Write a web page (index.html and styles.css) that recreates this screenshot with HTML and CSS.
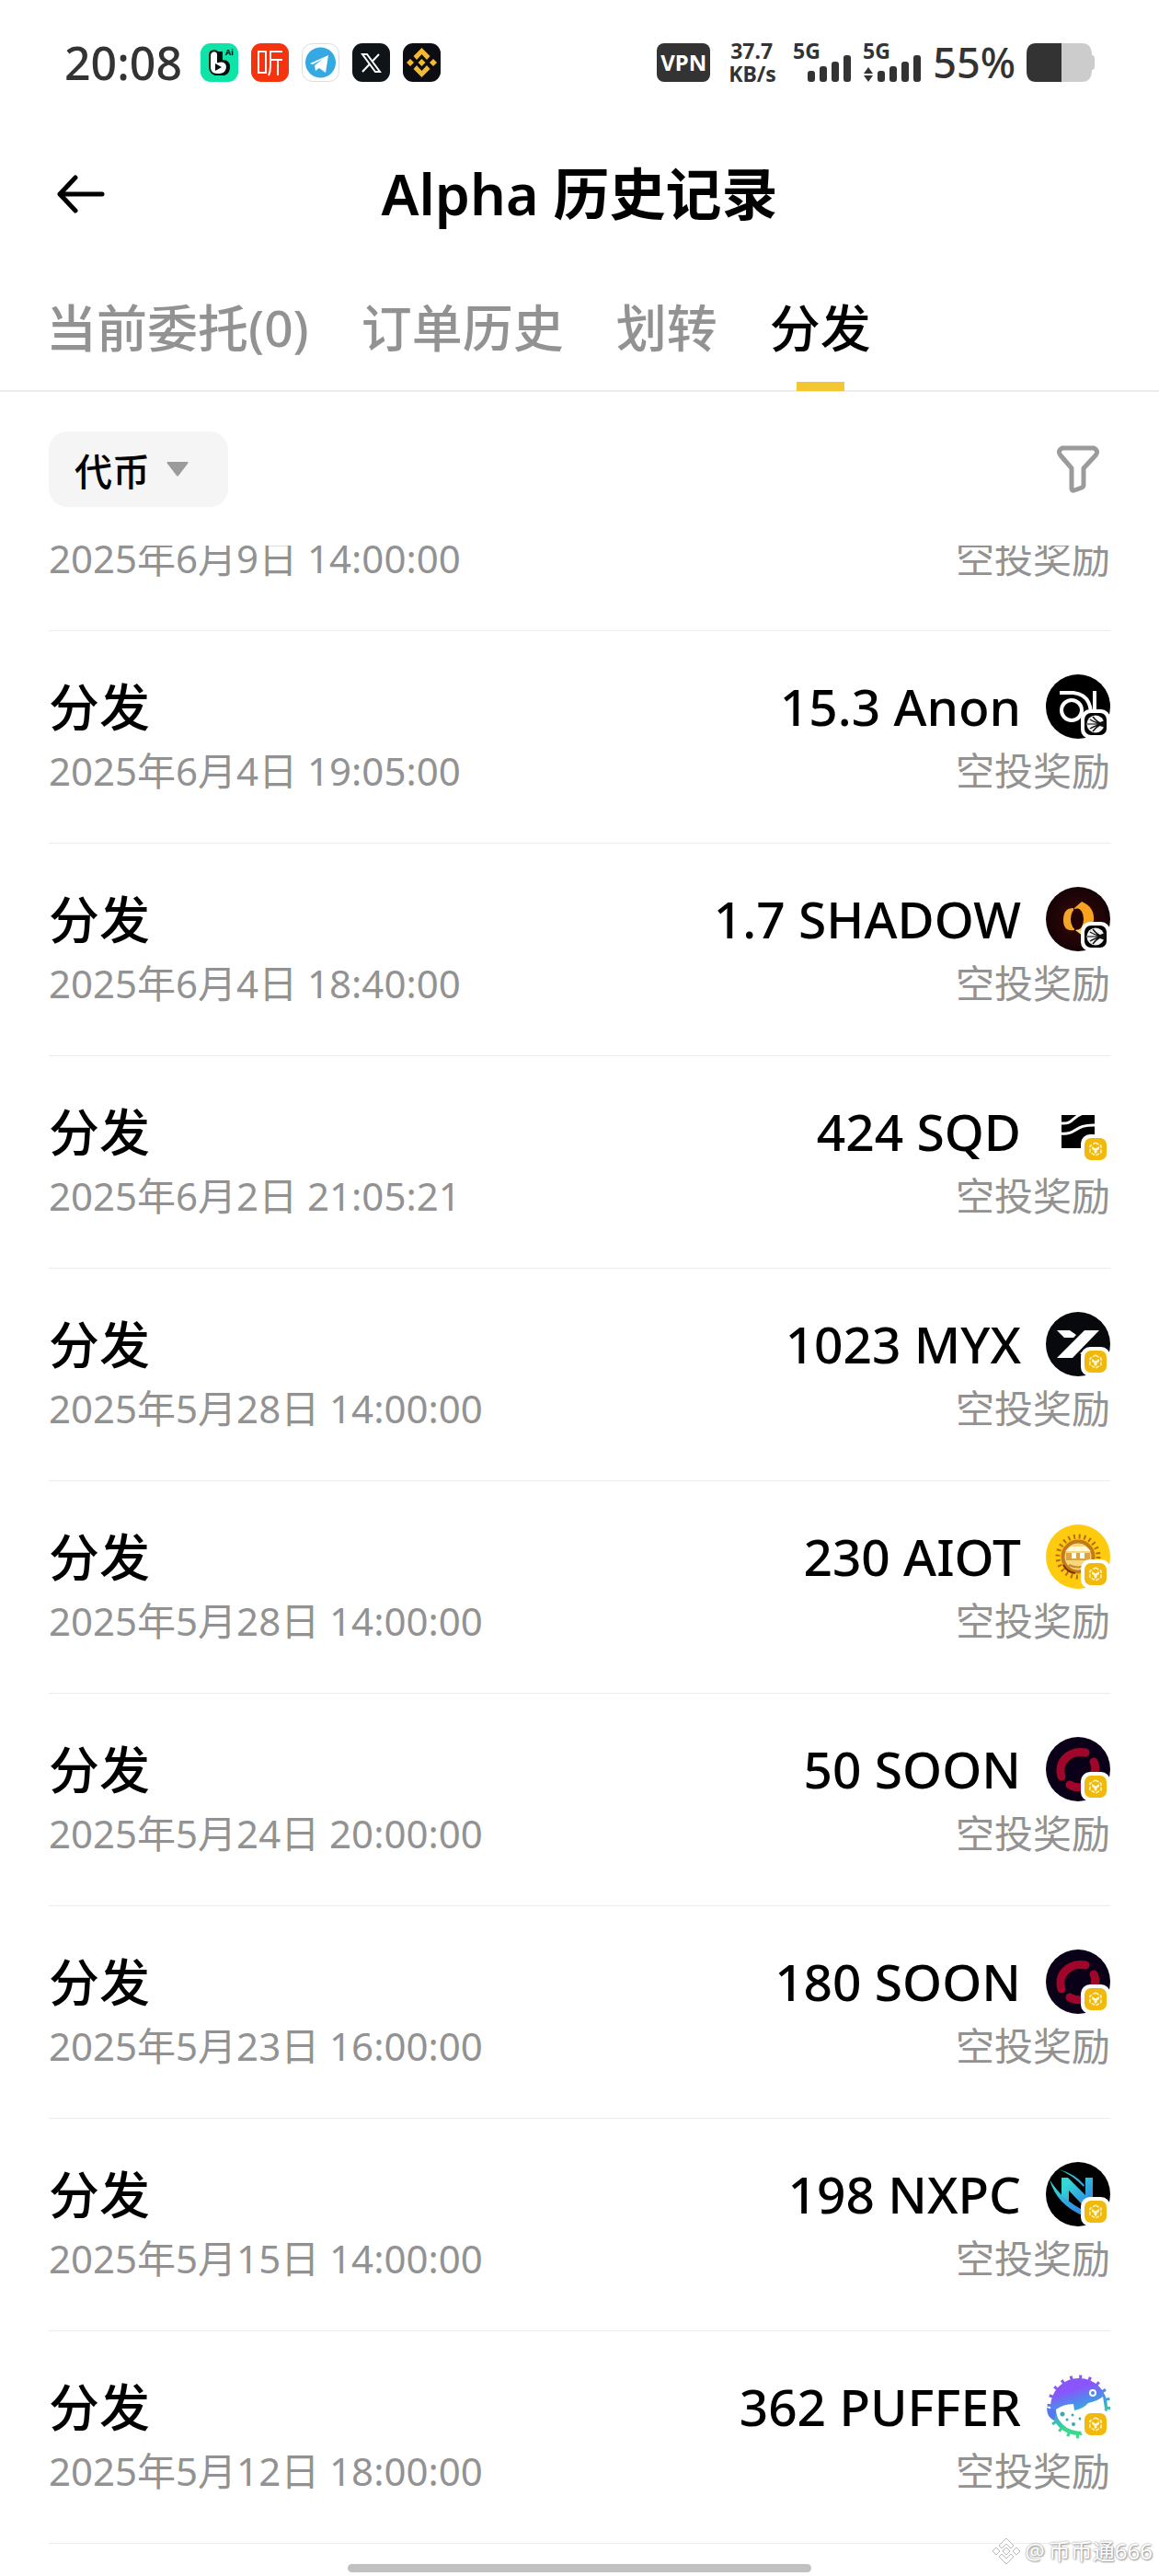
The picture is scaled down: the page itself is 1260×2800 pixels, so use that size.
FILE: index.html
```html
<!DOCTYPE html>
<html lang="zh-CN">
<head>
<meta charset="utf-8">
<meta name="viewport" content="width=device-width, initial-scale=1">
<title>Alpha 历史记录</title>
<link rel="stylesheet" href="styles.css">
</head>
<body>
<svg class="sprite" aria-hidden="true">
  <defs>
    <linearGradient id="nx" x1="0" y1="0" x2="1" y2="1"><stop offset=".2" stop-color="#35d6d3"/><stop offset=".8" stop-color="#2f8fe6"/></linearGradient>
    <linearGradient id="pf" x1=".3" y1="0" x2=".6" y2="1"><stop offset=".2" stop-color="#8a55fb"/><stop offset=".5" stop-color="#3f9be6"/><stop offset=".8" stop-color="#3bd98c"/></linearGradient>
    <radialGradient id="sh"><stop offset="0" stop-color="#3a0a08"/><stop offset="1" stop-color="#150206"/></radialGradient>
  </defs>
  <symbol id="bnb" viewBox="0 0 32 32">
    <rect width="32" height="32" rx="10" fill="#fff"/>
    <rect x="4" y="4" width="24" height="24" rx="7" fill="#f0b90b"/>
    <path d="M16 9l6 3.500v7L16 23l-6-3.500v-7z" fill="none" stroke="#fff3c4" stroke-width="1.500" stroke-dasharray="4 1.500"/>
    <path d="M12 13l4 2.500 4-2.500v3l-2.500 1.500v2L16 21l-1.500-1.500v-2L12 16z" fill="#fff8dc"/>
  </symbol>
  <symbol id="sonic" viewBox="0 0 32 32">
    <rect width="32" height="32" rx="10" fill="#fff"/>
    <rect x="4" y="4" width="24" height="24" rx="7" fill="#000"/>
    <circle cx="16" cy="16" r="9.500" fill="#f2f2f2"/>
    <path d="M25 16c-5 0-8-3-12-8M25 16c-5 0-8 3-12 8M25 16c-7-1-12-3-15-5M25 16c-7 1-12 3-15 5" fill="none" stroke="#111" stroke-width="1.500"/>
    <path d="M6 16h12" stroke="#777" stroke-width="2"/><path d="M16 16l10-4v8z" fill="#111"/>
  </symbol>
  <symbol id="soon" viewBox="0 0 70 70">
    <circle cx="35" cy="35" r="35" fill="#0a0118"/>
    <path d="M17 43C12 29 24 14 43 17M52 27q3 6 1 11M26 52q6 4 14 2" fill="none" stroke="#a0062a" stroke-width="9" stroke-linecap="round"/>
    <use href="#bnb" x="38" y="38" width="32" height="32"/>
  </symbol>
</svg>

<div class="screen">
  <div class="status">
    <div class="status-left">
      <span class="clock">20:08</span>
      <div class="apps">
        <svg class="app" viewBox="0 0 41 42" aria-hidden="true"><rect width="41" height="42" rx="11" fill="#0fe3a8"/><path d="M15 9v26h11q6-2 6-9 0-8-8-8V9z" fill="#050f10"/><path d="M12 9q5-2 7 2v9q9-2 10 5 0 8-8 9-10 1-11-7V14q0-4 2-5z" fill="#fff" stroke="#050f10" stroke-width="2"/><path d="M16 22l7 4-7 4z" fill="#050f10"/><text x="27" y="13" class="app-ai">Ai</text></svg>
        <svg class="app" viewBox="0 0 41 42" aria-hidden="true"><rect width="41" height="42" rx="11" fill="#f5330f"/><path d="M8 9h8v23H8zM34 9H21v16q0 6-2 10M21 18h13M29 18v17" fill="none" stroke="#fff" stroke-width="2"/></svg>
        <svg class="app" viewBox="0 0 41 42" aria-hidden="true"><rect x=".5" y=".5" width="40" height="41" rx="11" fill="#fff" stroke="#ddd"/><circle cx="20.500" cy="21" r="16.500" fill="#34a9e2"/><path d="M9 22l20-9-3 19-7-5-4 3-1-6 9-7-11 6z" fill="#fff"/></svg>
        <svg class="app" viewBox="0 0 41 42" aria-hidden="true"><rect width="41" height="42" rx="11" fill="#0f1419"/><path d="M29 12L11 31" stroke="#fff" stroke-width="2"/><path d="M11 12h5l14 19h-5z" fill="#0f1419" stroke="#fff" stroke-width="2"/></svg>
        <svg class="app" viewBox="0 0 41 42" aria-hidden="true"><rect width="41" height="42" rx="11" fill="#0c0d12"/><g fill="#f3ba2f"><path d="M20.500 5l9 9-3.500 4-5.500-6-5.500 6-3.500-4zM20.500 37l9-9-3.500-4-5.500 6-5.500-6-3.500 4zM20.500 17l4 4-4 4-4-4zM8 17l4 4-4 4-4-4zM33 17l4 4-4 4-4-4z"/></g></svg>
      </div>
    </div>
    <div class="status-right">
      <span class="vpn">VPN</span>
      <span class="speed">37.7<br>KB/s</span>
      <svg class="signal" viewBox="0 0 64 42"><text x="0" y="17">5G</text><g><rect x="16" y="30" width="8" height="12" rx="3"/><rect x="29" y="25" width="8" height="17" rx="3"/><rect x="42" y="20" width="8" height="22" rx="3"/><rect x="55" y="13" width="8" height="29" rx="3"/></g></svg>
      <svg class="signal" viewBox="0 0 64 42"><text x="0" y="17">5G</text><path d="M1 33l5-7 5 7zM1 35h10l-5 7z"/><g><rect x="16" y="30" width="8" height="12" rx="3"/><rect x="29" y="25" width="8" height="17" rx="3"/><rect x="42" y="20" width="8" height="22" rx="3"/><rect x="55" y="13" width="8" height="29" rx="3"/></g></svg>
      <span class="percent">55%</span>
      <svg class="battery" viewBox="0 0 74 42" role="img" aria-label="电量"><path d="M38 0h22q11 0 11 13 3 0 3 4v8q0 4-3 4 0 13-11 13H38z" fill="#ccc"/><path d="M38 0H10Q0 0 0 12v18q0 12 10 12h28z" fill="#333"/></svg>
    </div>
  </div>

  <header class="header">
    <button class="back" type="button" aria-label="返回"><svg viewBox="0 0 54 42"><path d="M22 3L5 21l17 18M5 21h46" fill="none" stroke="#000" stroke-width="5" stroke-linecap="round" stroke-linejoin="round"/></svg></button>
    <h1 class="title">Alpha 历史记录</h1>
  </header>

  <nav class="tabs">
    <a class="tab" href="#orders">当前委托(0)</a>
    <a class="tab" href="#history">订单历史</a>
    <a class="tab" href="#transfer">划转</a>
    <a class="tab tab-active" href="#list" aria-current="page">分发</a>
  </nav>

  <div class="filters">
    <button class="pill" type="button">代币<svg class="caret" viewBox="0 0 24 16" aria-hidden="true"><path d="M1 0h22q1 1 0 2L13 15q-1 1-2 0L1 2Q0 1 1 0z" fill="#9b9b9b"/></svg></button>
    <button class="funnel" type="button" aria-label="筛选"><svg viewBox="0 0 48 52"><path d="M7 3h34q6 3 2 8L30 25v18q0 2-2 3l-8 3q-3 1-3-2V25L5 11Q1 6 7 3z" fill="none" stroke="#9b9b9b" stroke-width="5" stroke-linejoin="round"/></svg></button>
  </div>

  <ul class="list" id="list">
    <li class="row row-cut">
      <div class="meta"><time class="date">2025年6月9日 14:00:00</time><span class="kind">空投奖励</span></div>
    </li>
    <li class="row">
      <div class="head"><span class="name">分发</span><span class="amount">15.3 Anon</span>
        <svg class="coin" viewBox="0 0 70 70" aria-hidden="true"><circle cx="35" cy="35" r="35" fill="#000"/><path d="M15 20h15q18 2 19 22M53 18v22" fill="none" stroke="#fff" stroke-width="4"/><circle cx="28" cy="39" r="11" fill="none" stroke="#fff" stroke-width="4"/><use href="#sonic" x="38" y="38" width="32" height="32"/></svg></div>
      <div class="meta"><time class="date">2025年6月4日 19:05:00</time><span class="kind">空投奖励</span></div>
    </li>
    <li class="row">
      <div class="head"><span class="name">分发</span><span class="amount">1.7 SHADOW</span>
        <svg class="coin" viewBox="0 0 70 70" aria-hidden="true"><circle cx="35" cy="35" r="35" fill="url(#sh)"/><path d="M31 23l8-7q14 6 13 20-1 9-9 18l-10-7z" fill="#f7a31f"/><path d="M30 23q-11 0-11 13t12 11z" fill="#f5a52a"/><path d="M32 47l9 7-4-9z" fill="#ffd075"/><ellipse cx="34" cy="35" rx="7" ry="11.500" fill="#220406"/><use href="#sonic" x="38" y="38" width="32" height="32"/></svg></div>
      <div class="meta"><time class="date">2025年6月4日 18:40:00</time><span class="kind">空投奖励</span></div>
    </li>
    <li class="row">
      <div class="head"><span class="name">分发</span><span class="amount">424 SQD</span>
        <svg class="coin" viewBox="0 0 70 70" aria-hidden="true"><path d="M17 17h36v36H17z" fill="#000"/><path d="M16 26c14 1 11-6 24-11M16 37c18 2 14-10 38-9" fill="none" stroke="#fff" stroke-width="3"/><use href="#bnb" x="38" y="38" width="32" height="32"/></svg></div>
      <div class="meta"><time class="date">2025年6月2日 21:05:21</time><span class="kind">空投奖励</span></div>
    </li>
    <li class="row">
      <div class="head"><span class="name">分发</span><span class="amount">1023 MYX</span>
        <svg class="coin" viewBox="0 0 70 70" aria-hidden="true"><circle cx="35" cy="35" r="35" fill="#07090c"/><path d="M42 20h16L29 50H12zM12 20h14l7 5-3 3H20zM37 45l7-4v8z" fill="#fff"/><use href="#bnb" x="38" y="38" width="32" height="32"/></svg></div>
      <div class="meta"><time class="date">2025年5月28日 14:00:00</time><span class="kind">空投奖励</span></div>
    </li>
    <li class="row">
      <div class="head"><span class="name">分发</span><span class="amount">230 AIOT</span>
        <svg class="coin" viewBox="0 0 70 70" aria-hidden="true"><circle cx="35" cy="35" r="35" fill="#fecb0e"/><circle cx="35" cy="35" r="22" fill="none" stroke="#b86a12" stroke-width="5" stroke-dasharray="2 3.760"/><circle cx="35" cy="35" r="16.500" fill="#f7d77a" stroke="#c47a1c" stroke-width="4"/><path d="M27 24h16l6 5H21z" fill="#fff8dc"/><path d="M22 31h26v8H22z" fill="#d9a441"/><path d="M28 31h5v6h-5zM37 31h5v6h-5z" fill="#fff"/><path d="M25 44q10 5 20 0" fill="none" stroke="#c98a2b" stroke-width="2"/><path d="M19 44q4 8 13 9" fill="none" stroke="#7d2d08" stroke-width="2"/><use href="#bnb" x="38" y="38" width="32" height="32"/></svg></div>
      <div class="meta"><time class="date">2025年5月28日 14:00:00</time><span class="kind">空投奖励</span></div>
    </li>
    <li class="row">
      <div class="head"><span class="name">分发</span><span class="amount">50 SOON</span>
        <svg class="coin" viewBox="0 0 70 70" aria-hidden="true"><use href="#soon" width="70" height="70"/></svg></div>
      <div class="meta"><time class="date">2025年5月24日 20:00:00</time><span class="kind">空投奖励</span></div>
    </li>
    <li class="row">
      <div class="head"><span class="name">分发</span><span class="amount">180 SOON</span>
        <svg class="coin" viewBox="0 0 70 70" aria-hidden="true"><use href="#soon" width="70" height="70"/></svg></div>
      <div class="meta"><time class="date">2025年5月23日 16:00:00</time><span class="kind">空投奖励</span></div>
    </li>
    <li class="row">
      <div class="head"><span class="name">分发</span><span class="amount">198 NXPC</span>
        <svg class="coin" viewBox="0 0 70 70" aria-hidden="true"><circle cx="35" cy="35" r="35" fill="#000"/><path d="M17 17h7l19 19V17h8v33h-8L25 31v15l-8-8z" fill="url(#nx)"/><path d="M4 19q8 28 38 40l2-5Q18 42 4 19zM14 8q18 5 28 17l-1 2Q29 14 14 8z" fill="url(#nx)"/><use href="#bnb" x="38" y="38" width="32" height="32"/></svg></div>
      <div class="meta"><time class="date">2025年5月15日 14:00:00</time><span class="kind">空投奖励</span></div>
    </li>
    <li class="row">
      <div class="head"><span class="name">分发</span><span class="amount">362 PUFFER</span>
        <svg class="coin" viewBox="0 0 70 70" aria-hidden="true"><circle cx="36" cy="35" r="32" fill="none" stroke="url(#pf)" stroke-width="5" stroke-dasharray="3 7.050"/><circle cx="36" cy="35" r="31" fill="url(#pf)"/><path d="M11 38q8-6 19-6l1 7q10-2 15-8 10-2 16-7l2 13-4 14-19 11q-15 0-23-8-7-7-7-16z" fill="#fff"/><path d="M1 36l6 2-2-4 6 6-2 10q-8-4-8-14z" fill="#5377ee"/><circle cx="51" cy="20" r="3" fill="#3b93df" stroke="#fff" stroke-width="2"/><g fill="#35a9b5"><circle cx="18" cy="43" r="2.500"/><circle cx="29" cy="44" r="1.500"/><circle cx="23" cy="49" r="1.500"/><circle cx="30" cy="54" r="2"/><circle cx="37" cy="48" r="1.500"/></g><use href="#bnb" x="38" y="38" width="32" height="32"/></svg></div>
      <div class="meta"><time class="date">2025年5月12日 18:00:00</time><span class="kind">空投奖励</span></div>
    </li>
  </ul>

  <footer class="bottom">
    <div class="home-bar"></div>
    <div class="mark"><svg viewBox="0 0 32 30" aria-hidden="true"><path d="M16 1l8 8-3 3-5-5-5 5-3-3zM16 29l8-8-3-3-5 5-5-5-3 3zM16 11l4 4-4 4-4-4zM5 11l4 4-4 4-4-4zM27 11l4 4-4 4-4-4z" fill="#fff" stroke="#bbb" stroke-width="1"/></svg><span>@</span><span>币币通666</span></div>
  </footer>
</div>
</body>
</html>
```
FILE: styles.css
```css
* { box-sizing: border-box; }
body {
  margin: 0;
  background: #fff;
  color: #000;
  font-family: "Noto Sans", "Noto Sans CJK SC", sans-serif;
}
button { margin: 0; padding: 0; border: 0; background: none; font: inherit; color: inherit; cursor: pointer; }
svg { display: block; flex: none; }
.sprite { position: absolute; width: 0; height: 0; }
.screen { position: relative; display: flex; flex-direction: column; min-height: 100vh; }

/* Status bar */
.status {
  display: flex; justify-content: space-between; align-items: center;
  height: 136px; padding: 0 70px; color: #333;
}
.status-left, .status-right, .apps { display: flex; align-items: center; }
.status-left { gap: 20px; }
.clock { font-size: 50px; font-weight: 500; line-height: 60px; }
.apps { gap: 14px; }
.app { width: 41px; height: 42px; }
.app-ai { font-size: 9px; font-weight: 700; fill: #050f10; }
.vpn {
  width: 58px; height: 42px; border-radius: 8px; background: #333; color: #fff;
  font-size: 24px; font-weight: 700; line-height: 42px; text-align: center;
}
.speed { width: 50px; margin: 0 20px; font-size: 23px; font-weight: 700; line-height: 25px; text-align: center; }
.signal { width: 64px; height: 42px; margin-right: 12px; fill: #333; overflow: visible; }
.signal text { font-size: 23px; font-weight: 700; }
.percent { margin-right: 12px; font-size: 45px; font-weight: 500; line-height: 60px; }
.battery { width: 74px; height: 42px; }

/* Header */
.header {
  display: grid; grid-template-columns: 1fr auto 1fr; align-items: center;
  height: 150px; padding: 0 60px;
}
.back { justify-self: start; }
.back svg { width: 54px; height: 42px; }
.title { margin: 0; font-size: 61px; font-weight: 600; line-height: 80px; }

/* Tabs */
.tabs { display: flex; gap: 57px; height: 140px; padding: 0 50px; border-bottom: 2px solid #ececec; }
.tab {
  position: relative; color: #929292; text-decoration: none;
  font-size: 55px; font-weight: 500; line-height: 140px; white-space: nowrap;
}
.tab-active { color: #000; }
.tab-active::after {
  content: ""; position: absolute; left: 50%; bottom: -1px;
  width: 52px; height: 10px; margin-left: -26px; background: #f3c732;
}

/* Filters */
.filters { display: flex; justify-content: space-between; align-items: center; padding: 43px 53px 42px; }
.pill {
  display: flex; align-items: center; gap: 18px;
  height: 82px; padding: 0 43px 0 28px; border-radius: 20px; background: #f5f5f5;
  font-size: 41px; font-weight: 500;
}
.caret { width: 24px; height: 16px; }
.funnel { display: flex; justify-content: center; width: 70px; }
.funnel svg { width: 48px; height: 52px; }

/* Records */
.list { flex: 1; margin: 0; padding: 0 53px; list-style: none; overflow: hidden; }
.row { padding: 47px 0 51px; border-bottom: 1px solid #ececec; }
.row-cut { padding-top: 0; }
.row-cut .meta { margin-top: -13px; }
.head { display: flex; align-items: center; height: 70px; }
.name { font-size: 55px; font-weight: 500; line-height: 70px; }
.amount { margin-left: auto; margin-right: 27px; font-size: 55px; font-weight: 500; line-height: 70px; }
.coin { width: 70px; height: 70px; }
.meta {
  display: flex; justify-content: space-between; margin-top: 8px;
  color: #929292; font-size: 42px; line-height: 54px;
}

/* Bottom edge */
.bottom { display: flex; justify-content: center; padding-bottom: 4px; }
.home-bar { width: 40%; height: 9px; border-radius: 5px; background: #c1c1c1; }
.mark {
  position: absolute; right: 7px; bottom: 9px; display: flex; align-items: center; gap: 4px;
  color: #fff; font-size: 24px; line-height: 36px; text-shadow: 0 0 2px #888, 1px 1px 2px #999;
}
.mark svg { width: 32px; height: 30px; }
```
